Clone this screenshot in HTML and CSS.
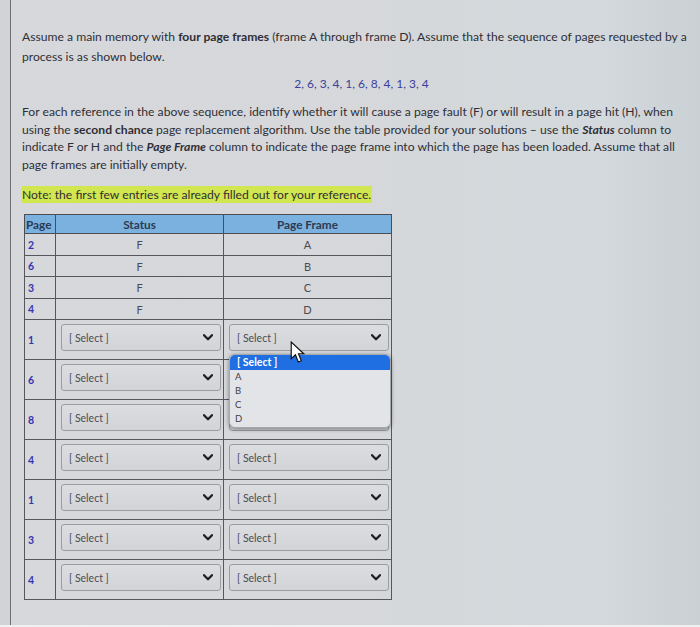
FILE: index.html
```html
<!DOCTYPE html>
<html>
<head>
<meta charset="utf-8">
<link rel="stylesheet" href="styles.css">
</head>
<body>
<div class="page">
  <div class="content">
    <p class="p1">Assume a main memory with <b>four page frames</b> (frame A through frame D). Assume that the sequence of pages requested by a process is as shown below.</p>
    <p class="seq">2, 6, 3, 4, 1, 6, 8, 4, 1, 3, 4</p>
    <p class="p2">For each reference in the above sequence, identify whether it will cause a page fault (F) or will result in a page hit (H), when using the <b>second chance</b> page replacement algorithm. Use the table provided for your solutions &ndash; use the <b><i>Status</i></b> column to indicate F or H and the <b><i>Page Frame</i></b> column to indicate the page frame into which the page has been loaded. Assume that all page frames are initially empty.</p>
    <p class="note"><span class="hl">Note: the first few entries are already filled out for your reference.</span></p>

    <table class="tbl">
      <thead>
        <tr><th class="c-page">Page</th><th class="c-stat">Status</th><th class="c-frame">Page Frame</th></tr>
      </thead>
      <tbody>
        <tr class="fixed"><td class="num">2</td><td>F</td><td>A</td></tr>
        <tr class="fixed"><td class="num">6</td><td>F</td><td>B</td></tr>
        <tr class="fixed"><td class="num">3</td><td>F</td><td>C</td></tr>
        <tr class="fixed"><td class="num">4</td><td>F</td><td>D</td></tr>

        <tr class="sel"><td class="num">1</td>
          <td><div class="select"><span>[ Select ]</span><svg class="chev" viewBox="0 0 10 7"><polyline points="1,1.2 5,5.2 9,1.2"/></svg></div></td>
          <td class="anchor"><div class="select"><span>[ Select ]</span><svg class="chev" viewBox="0 0 10 7"><polyline points="1,1.2 5,5.2 9,1.2"/></svg></div>
            <div class="dropdown">
              <div class="opt active">[ Select ]</div>
              <div class="opt">A</div>
              <div class="opt">B</div>
              <div class="opt">C</div>
              <div class="opt">D</div>
            </div>
            <svg class="cursor" viewBox="0 0 14 22"><path d="M1 1 L1 17 L5 13.2 L7.8 20 L10.6 18.8 L7.9 12.2 L13 12.2 Z"/></svg>
          </td></tr>
        <tr class="sel"><td class="num">6</td>
          <td><div class="select"><span>[ Select ]</span><svg class="chev" viewBox="0 0 10 7"><polyline points="1,1.2 5,5.2 9,1.2"/></svg></div></td>
          <td><div class="select"><span>[ Select ]</span><svg class="chev" viewBox="0 0 10 7"><polyline points="1,1.2 5,5.2 9,1.2"/></svg></div></td></tr>
        <tr class="sel"><td class="num">8</td>
          <td><div class="select"><span>[ Select ]</span><svg class="chev" viewBox="0 0 10 7"><polyline points="1,1.2 5,5.2 9,1.2"/></svg></div></td>
          <td><div class="select"><span>[ Select ]</span><svg class="chev" viewBox="0 0 10 7"><polyline points="1,1.2 5,5.2 9,1.2"/></svg></div></td></tr>
        <tr class="sel"><td class="num">4</td>
          <td><div class="select"><span>[ Select ]</span><svg class="chev" viewBox="0 0 10 7"><polyline points="1,1.2 5,5.2 9,1.2"/></svg></div></td>
          <td><div class="select"><span>[ Select ]</span><svg class="chev" viewBox="0 0 10 7"><polyline points="1,1.2 5,5.2 9,1.2"/></svg></div></td></tr>
        <tr class="sel"><td class="num">1</td>
          <td><div class="select"><span>[ Select ]</span><svg class="chev" viewBox="0 0 10 7"><polyline points="1,1.2 5,5.2 9,1.2"/></svg></div></td>
          <td><div class="select"><span>[ Select ]</span><svg class="chev" viewBox="0 0 10 7"><polyline points="1,1.2 5,5.2 9,1.2"/></svg></div></td></tr>
        <tr class="sel"><td class="num">3</td>
          <td><div class="select"><span>[ Select ]</span><svg class="chev" viewBox="0 0 10 7"><polyline points="1,1.2 5,5.2 9,1.2"/></svg></div></td>
          <td><div class="select"><span>[ Select ]</span><svg class="chev" viewBox="0 0 10 7"><polyline points="1,1.2 5,5.2 9,1.2"/></svg></div></td></tr>
        <tr class="sel"><td class="num">4</td>
          <td><div class="select"><span>[ Select ]</span><svg class="chev" viewBox="0 0 10 7"><polyline points="1,1.2 5,5.2 9,1.2"/></svg></div></td>
          <td><div class="select"><span>[ Select ]</span><svg class="chev" viewBox="0 0 10 7"><polyline points="1,1.2 5,5.2 9,1.2"/></svg></div></td></tr>
      </tbody>
    </table>
  </div>
</div>
<div class="bottom"></div>
</body>
</html>
```
FILE: styles.css
```css
html, body {
  margin: 0;
  padding: 0;
}
body {
  width: 700px;
  height: 627px;
  overflow: hidden;
  font-family: Lato, "Open Sans", sans-serif;
  color: #2e2f36;
  background: linear-gradient(90deg, #d2d3d6 0%, #d6d7da 45%, #d3d7da 70%, #cbd1d5 100%);
}
.page {
  height: 625px;
  margin-left: 10px;
  border-left: 1px solid #6b6d70;
  box-sizing: border-box;
  background: linear-gradient(90deg, rgba(218,219,222,0.6) 0%, rgba(214,216,219,0.2) 60%, rgba(215,222,226,0.5) 85%, rgba(200,208,212,0.4) 100%);
}
.bottom {
  height: 2px;
  background: #eef0f1;
}
.content {
  padding: 27px 3px 0 11px;
}
p { margin: 0; }
.p1 {
  font-size: 12.15px;
  line-height: 19.5px;
}
.seq {
  margin-top: 9px;
  text-align: center;
  color: #3b3f9c;
  font-size: 12px;
  line-height: 18px;
  padding-left: 4px;
}
.p2 {
  margin-top: 10px;
  font-size: 12.15px;
  line-height: 17.6px;
}
.note {
  margin-top: 14px;
  font-size: 12.15px;
  line-height: 16px;
}
.hl {
  background: #d2e64f;
  padding: 1px 1px 1px 0;
}
.tbl {
  margin-top: 11px;
  margin-left: 2px;
  border-collapse: collapse;
  border: 1.5px solid #4b4d52;
  font-size: 11px;
}
.tbl th {
  background: #7ab1de;
  color: #2c3a52;
  font-weight: bold;
  height: 18px;
  padding: 0;
  border: 1px solid #4b4d52;
  font-size: 11.8px;
}
.c-page { width: 29px; text-align: left; padding-left: 1px !important; }
.c-stat { width: 167px; }
.c-frame { width: 167px; }
.tbl td {
  border: 1px solid #55575c;
  padding: 0;
  text-align: center;
  color: #4a4b50;
}
.fixed td {
  height: 20.5px;
  font-size: 11px;
}
.tbl td.num {
  text-align: left;
  padding-left: 3px;
  color: #3535b0;
  font-weight: bold;
  font-size: 10.5px;
}
.sel td {
  height: 35px;
  vertical-align: middle;
}
.sel td:not(.num) {
  padding: 0 2px 4px 5px;
}
.select {
  height: 27px;
  box-sizing: border-box;
  border: 1px solid #9a9ca0;
  border-radius: 3px;
  background: linear-gradient(180deg, #dcdde0, #d2d4d7);
  display: flex;
  align-items: center;
  justify-content: space-between;
  padding: 0 7px 0 7px;
  font-size: 10.5px;
  color: #4b4c52;
  text-align: left;
}
.chev {
  width: 10px;
  height: 7px;
  fill: none;
  stroke: #1e1f24;
  stroke-width: 2.3;
  stroke-linecap: round;
  stroke-linejoin: round;
}
.anchor {
  position: relative;
}
.dropdown {
  position: absolute;
  left: 5px;
  top: 34px;
  width: 162px;
  height: 74px;
  box-sizing: border-box;
  background: #e3e4e7;
  border-radius: 6px;
  box-shadow: 0 1px 4px rgba(0,0,0,0.45);
  border: 1px solid #a5a8ad;
  overflow: hidden;
  z-index: 5;
  text-align: left;
}
.opt {
  font-size: 9.5px;
  line-height: 14px;
  padding-left: 5px;
  color: #3e4046;
}
.opt.active {
  background: #1f6fe3;
  color: #ffffff;
  font-weight: bold;
  font-size: 10.5px;
  line-height: 15px;
  padding-left: 7px;
}
.cursor {
  position: absolute;
  left: 66px;
  top: 21px;
  width: 15px;
  height: 23px;
  fill: #ffffff;
  stroke: #111;
  stroke-width: 1.1;
  z-index: 6;
}
```
